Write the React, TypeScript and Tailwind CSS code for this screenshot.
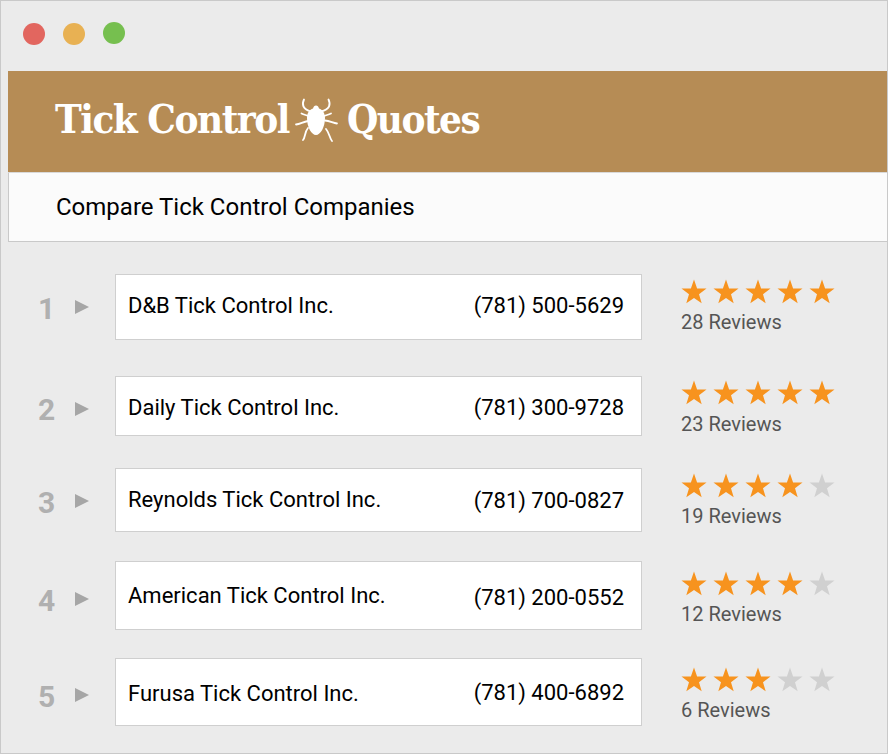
const companies = [
  { id: 1, name: 'D&B Tick Control Inc.', phone: '(781) 500-5629', stars: 5, reviews: '28 Reviews', row: 'h-[66px] mt-[32px]', label: 'pt-[21px]', nameOff: 'pt-[16px]', phoneOff: 'pt-[16px]', arrow: 'pt-[26px]', rating: 'pt-[5px]', gap: 'mt-[5px]' },
  { id: 2, name: 'Daily Tick Control Inc.', phone: '(781) 300-9728', stars: 5, reviews: '23 Reviews', row: 'h-[60px] mt-[36px]', label: 'pt-[20px]', nameOff: 'pt-[16px]', phoneOff: 'pt-[16px]', arrow: 'pt-[26px]', rating: 'pt-[4px]', gap: 'mt-[6px]' },
  { id: 3, name: 'Reynolds Tick Control Inc.', phone: '(781) 700-0827', stars: 4, reviews: '19 Reviews', row: 'h-[64px] mt-[32px]', label: 'pt-[21px]', nameOff: 'pt-[16px]', phoneOff: 'pt-[17px]', arrow: 'pt-[26px]', rating: 'pt-[5px]', gap: 'mt-[5px]' },
  { id: 4, name: 'American Tick Control Inc.', phone: '(781) 200-0552', stars: 4, reviews: '12 Reviews', row: 'h-[69px] mt-[29px]', label: 'pt-[26px]', nameOff: 'pt-[19px]', phoneOff: 'pt-[21px]', arrow: 'pt-[31px]', rating: 'pt-[10px]', gap: 'mt-[5px]' },
  { id: 5, name: 'Furusa Tick Control Inc.', phone: '(781) 400-6892', stars: 3, reviews: '6 Reviews', row: 'h-[68px] mt-[28px]', label: 'pt-[25px]', nameOff: 'pt-[20px]', phoneOff: 'pt-[19px]', arrow: 'pt-[30px]', rating: 'pt-[9px]', gap: 'mt-[5px]' },
];

function Star({ on }: { on: boolean }) {
  return (
    <svg width="26" height="25" viewBox="0 0 26 25" className={on ? 'fill-[#f7931e]' : 'fill-[#d0d0d0]'}>
      <path d="M13 0.5l3.1 8.9 9.4 0.2-7.5 5.7 2.7 9-7.7-5.4-7.7 5.4 2.7-9-7.500-5.7 9.4-0.2z" />
    </svg>
  );
}

function TickIcon() {
  return (
    <svg width="44" height="46" viewBox="14 8 44 46" className="shrink-0">
      <g fill="none" stroke="#fff" strokeWidth="1.800" strokeLinecap="round" strokeLinejoin="round">
        <path d="M24 9.500c-1.500 3-1.500 5-.5 7s3.500 4 7.500 5" />
        <path d="M48.500 9.500c1.500 3 1.500 5 .5 7s-3.500 4-8 5" />
        <path d="M16 34.500c4-.5 7-2.500 12-3.500" />
        <path d="M57 33.500c-4-.5-7-2.500-12-3" />
        <path d="M23 50c2.500-3 1.500-8 5-12" />
        <path d="M52 51c-2.500-3-2.500-8-6-12" />
        <path d="M21.500 23.500c3 1.500 5 1.500 8 3" />
        <path d="M51 23.500c-3 1.500-5 1.500-8 3" />
      </g>
      <path d="M36 15.500c1.500 0 2.500 1 3 3 3.500 1 6 4.500 6 9.500 0 9-4.500 17-9 17s-9-8-9-17c0-5 2.500-8.500 6-9.500.5-2 1.500-3 3-3z" fill="#fff" />
    </svg>
  );
}

export default function App() {
  return (
    <div className="w-[888px] h-[754px] bg-[#ebebeb] border border-[#c9c9c9] font-['Roboto',sans-serif] overflow-hidden">
      <div className="flex items-center gap-[18px] h-[70px] pl-[22px] pb-[5px]">
        <span className="w-[22px] h-[22px] rounded-full bg-[#e2665f]" />
        <span className="w-[22px] h-[22px] rounded-full bg-[#e8b153]" />
        <span className="w-[22px] h-[22px] rounded-full bg-[#76bf4f] -translate-y-px" />
      </div>
      <div className="ml-[7px]">
        <div className="h-[102px] bg-[#b68c55] flex items-center pl-[47px] pb-[6px] border-b border-[#d9d9d9]">
          <h1 className="flex items-center font-['DejaVu_Serif',serif] font-bold text-[40px] leading-none text-white [font-stretch:condensed] tracking-[-1.5px] whitespace-nowrap">
            <span>Tick Control</span>
            <span className="ml-[5px] mr-[9px] translate-y-[2px]"><TickIcon /></span>
            <span>Quotes</span>
          </h1>
        </div>
        <div className="h-[69px] bg-[#fbfbfb] border-l border-b border-[#c9c9c9] flex items-center pl-[47px]">
          <h2 className="text-[24px] text-black">Compare Tick Control Companies</h2>
        </div>
      </div>
      {companies.map((c) => (
        <div key={c.id} className={`flex ${c.row}`}>
          <div className="w-[37px] shrink-0" />
          <div className={`w-[37px] shrink-0 text-[30px] leading-[28px] font-bold text-[#b0b0b0] ${c.label}`}>
            {c.id}
          </div>
          <div className={`w-[40px] shrink-0 ${c.arrow}`}>
            <span className="block w-0 h-0 border-y-[7px] border-y-transparent border-l-[14px] border-l-[#a6a6a6]" />
          </div>
          <div className="w-[527px] shrink-0 bg-white border border-[#cfcfcf] flex justify-between pl-[12px] pr-[17px] text-[22px] leading-[30px] text-black">
            <span className={c.nameOff}>{c.name}</span>
            <span className={c.phoneOff}>{c.phone}</span>
          </div>
          <div className={`ml-[39px] ${c.rating}`}>
            <div className="flex gap-[6px]">
              {[1, 2, 3, 4, 5].map((n) => (
                <Star key={n} on={n <= c.stars} />
              ))}
            </div>
            <div className={`text-[20px] leading-[26px] text-[#555555] ${c.gap}`}>{c.reviews}</div>
          </div>
        </div>
      ))}
    </div>
  );
}
